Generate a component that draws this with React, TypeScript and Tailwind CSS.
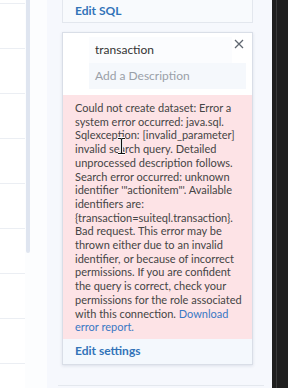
import React from "react";

const errorLines = [
  "Could not create dataset: Error a",
  "system error occurred: java.sql.",
  "Sqlexception: [invalid_parameter]",
  "invalid search query. Detailed",
  "unprocessed description follows.",
  "Search error occurred: unknown",
  "identifier '\"actionitem\"'. Available",
  "identifiers are:",
  "{transaction=suiteql.transaction}.",
  "Bad request. This error may be",
  "thrown either due to an invalid",
  "identifier, or because of incorrect",
  "permissions. If you are confident",
  "the query is correct, check your",
  "permissions for the role associated",
];

const App = () => {
  return (
    <div className="flex h-[388px] w-[288px] overflow-hidden bg-[#f6f8fd] font-['Lato','Liberation_Sans',sans-serif]">
      {/* list column */}
      <div className="flex w-[47px] shrink-0 bg-[#fcfdfe]">
        <div className="flex w-[25px] shrink-0 flex-col bg-white pt-[3px]">
          {Array.from({ length: 9 }).map((_, i) => (
            <div key={i} className="h-[45px] shrink-0 border-t border-[#ebeef3]" />
          ))}
        </div>
        <div className="ml-[1px] h-[253px] w-[4px] rounded-b-full bg-[#dfe5f0]" />
      </div>

      {/* main panel */}
      <div className="flex w-[225px] shrink-0 flex-col pl-[15px] pr-[19px]">
        <div className="flex h-[23px] shrink-0 items-center border-x border-b border-[#e3e7ee] bg-[#f8fafd] pl-[12px]">
          <span className="text-[12px] font-bold text-[#3273b8]">Edit SQL</span>
        </div>

        <div className="mt-[9px] flex flex-col border border-[#d9dee7] bg-white shadow-[0_1px_3px_rgba(30,50,90,0.12)]">
          <div className="relative flex flex-col pl-[26px] pr-[6px] pt-[4px] pb-[6px]">
            <div className="flex h-[26px] w-[143px] items-center bg-[#fbfcfe] pl-[6px] text-[12px] text-[#333]">
              transaction
            </div>
            <div className="flex h-[26px] items-center bg-[#f5f8fc] pl-[6px] text-[12px] text-[#9aa0a8]">
              Add a Description
            </div>
            <svg className="absolute right-[8px] top-[6px]" width="10" height="10" viewBox="0 0 10 10">
              <path d="M1 1L9 9M9 1L1 9" stroke="#5f6670" strokeWidth="1.3" fill="none" />
            </svg>
          </div>

          <div className="relative bg-[#fde3e6] pl-[12px] pr-[6px] pt-[6px] pb-[5px] text-[11px] leading-[13.7px] text-[#454545]">
            {errorLines.map((l, i) => (
              <div key={i} className="whitespace-nowrap">{l}</div>
            ))}
            <div className="whitespace-nowrap">
              with this connection. <span className="text-[#3a78c4]">Download</span>
            </div>
            <div className="whitespace-nowrap text-[#3a78c4]">error report.</div>
            {/* text cursor */}
            <svg className="absolute left-[54px] top-[42px]" width="9" height="18" viewBox="0 0 9 18">
              <path d="M1 1.5H3.5Q4.5 1.5 4.5 2.5V15.5Q4.5 16.5 3.5 16.5H1M8 1.5H5.5Q4.5 1.5 4.5 2.5M4.5 15.5Q4.5 16.5 5.5 16.5H8" stroke="#fff" strokeWidth="3" fill="none" />
              <path d="M1 1.5H3.5Q4.5 1.5 4.5 2.5V15.5Q4.5 16.5 3.5 16.5H1M8 1.5H5.5Q4.5 1.5 4.5 2.5M4.5 15.5Q4.5 16.5 5.5 16.5H8" stroke="#111" strokeWidth="1.2" fill="none" />
            </svg>
          </div>

          <div className="flex h-[25px] items-center bg-[#f4f8fd] pl-[12px]">
            <span className="text-[12px] font-bold text-[#3273b8]">Edit settings</span>
          </div>
        </div>

        <div className="mt-[20px] -ml-[4px] -mr-[11px] border-t border-[#e4e8ee]" />
      </div>

      {/* dark edge */}
      <div className="flex flex-1 bg-[#1f1f1f]">
        <div className="ml-[4px] w-[1px] bg-[#3a3a3a]" />
      </div>
    </div>
  );
};

export default App;
